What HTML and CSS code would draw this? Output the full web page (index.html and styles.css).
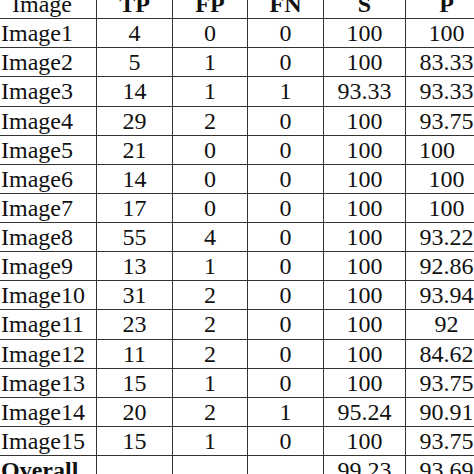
FILE: index.html
```html
<!DOCTYPE html>
<html>
<head>
<meta charset="utf-8">
<link rel="stylesheet" href="styles.css">
</head>
<body>
<table class="results">
  <colgroup>
    <col class="c-name"><col class="c-tp"><col class="c-fp"><col class="c-fn"><col class="c-s"><col class="c-p">
  </colgroup>
  <thead>
    <tr><th class="name-head">Image</th><th>TP</th><th>FP</th><th>FN</th><th>S</th><th>P</th></tr>
  </thead>
  <tbody>
    <tr><td class="name">Image1</td><td>4</td><td>0</td><td>0</td><td>100</td><td>100</td></tr>
    <tr><td class="name">Image2</td><td>5</td><td>1</td><td>0</td><td>100</td><td>83.33</td></tr>
    <tr><td class="name">Image3</td><td>14</td><td>1</td><td>1</td><td>93.33</td><td>93.33</td></tr>
    <tr><td class="name">Image4</td><td>29</td><td>2</td><td>0</td><td>100</td><td>93.75</td></tr>
    <tr><td class="name">Image5</td><td>21</td><td>0</td><td>0</td><td>100</td><td class="shift-left">100</td></tr>
    <tr><td class="name">Image6</td><td>14</td><td>0</td><td>0</td><td>100</td><td>100</td></tr>
    <tr><td class="name">Image7</td><td>17</td><td>0</td><td>0</td><td>100</td><td>100</td></tr>
    <tr><td class="name">Image8</td><td>55</td><td>4</td><td>0</td><td>100</td><td>93.22</td></tr>
    <tr><td class="name">Image9</td><td>13</td><td>1</td><td>0</td><td>100</td><td>92.86</td></tr>
    <tr><td class="name">Image10</td><td>31</td><td>2</td><td>0</td><td>100</td><td>93.94</td></tr>
    <tr><td class="name">Image11</td><td>23</td><td>2</td><td>0</td><td>100</td><td>92</td></tr>
    <tr><td class="name">Image12</td><td>11</td><td>2</td><td>0</td><td>100</td><td>84.62</td></tr>
    <tr><td class="name">Image13</td><td>15</td><td>1</td><td>0</td><td>100</td><td>93.75</td></tr>
    <tr><td class="name">Image14</td><td>20</td><td>2</td><td>1</td><td>95.24</td><td>90.91</td></tr>
    <tr><td class="name">Image15</td><td>15</td><td>1</td><td>0</td><td>100</td><td>93.75</td></tr>
    <tr class="overall"><td class="name">Overall</td><td></td><td></td><td></td><td>99.23</td><td>93.69</td></tr>
  </tbody>
</table>
</body>
</html>
```
FILE: styles.css
```css
html, body {
  margin: 0;
  padding: 0;
  background: #fff;
  overflow: hidden;
}

.results {
  border-collapse: collapse;
  table-layout: fixed;
  width: 500px;
  margin-top: -11px;
  margin-left: -13px;
  font-family: "Liberation Serif", "Times New Roman", Times, serif;
  font-size: 24px;
  color: #111;
}

.c-name { width: 109px; }
.c-tp { width: 76px; }
.c-fp { width: 75px; }
.c-fn { width: 76px; }
.c-s { width: 82px; }
.c-p { width: 82px; }

.results tr {
  height: 29.13px;
}

.results th,
.results td {
  border: 1.6px solid #333;
  padding: 0;
  text-align: center;
  vertical-align: middle;
  line-height: 26px;
  white-space: nowrap;
}

.results th {
  font-weight: bold;
}

.results th.name-head {
  font-weight: normal;
}

.results td.name {
  text-align: left;
  padding-left: 13px;
}

.overall td.name {
  font-weight: bold;
}

.results td.shift-left {
  padding-right: 19px;
}
```
